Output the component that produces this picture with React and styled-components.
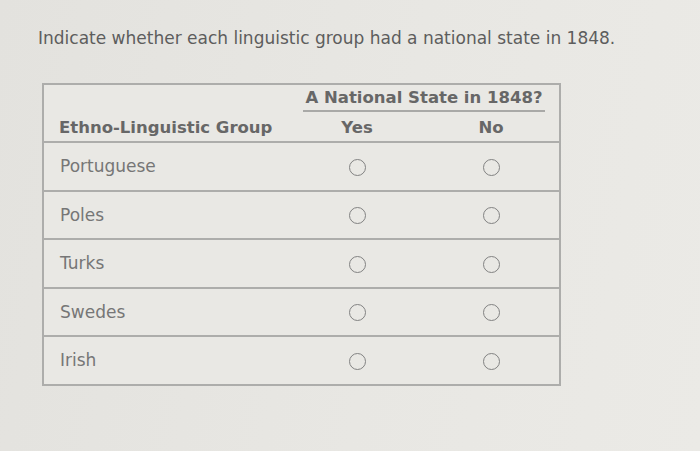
import React from 'react'
import styled, { createGlobalStyle } from 'styled-components'

const GlobalStyle = createGlobalStyle`
    body {
        margin: 0;
        background: #e5e4e0;
        font-family: "DejaVu Sans", Verdana, sans-serif;
    }
`

const Page = styled.div`
    width: 700px;
    height: 451px;
    padding: 28px 0 0 38px;
    box-sizing: border-box;
    background: linear-gradient(100deg, #e3e2de 0%, #e8e7e3 55%, #ebeae6 100%);
`

const Prompt = styled.p`
    margin: 0 0 35px;
    font-size: 17px;
    color: #5d5d5d;
    white-space: nowrap;
`

const Grid = styled.table`
    margin-left: 4px;
    width: 517px;
    table-layout: fixed;
    border-collapse: collapse;
    border: 2px solid #adadab;
    background: #e9e8e4;
`

const HeadCell = styled.th`
    padding: ${p => p.$top ? '3px 0 0' : '6px 0 4px'};
    font-size: 16.5px;
    font-weight: bold;
    color: #676767;
    white-space: nowrap;
    text-align: ${p => p.$left ? 'left' : 'center'};
    padding-left: ${p => p.$left ? '15px' : '0'};
    vertical-align: bottom;
`

const GroupTitle = styled.span`
    display: block;
    margin: 0 14px 0 12px;
    padding-bottom: 3px;
    border-bottom: 2px solid #a9a9a7;
`

const Row = styled.tr`
    border-top: 2px solid #adadab;
`

const Label = styled.td`
    height: 46.5px;
    padding: 0 0 0 16px;
    font-size: 17px;
    color: #767676;
    vertical-align: middle;
`

const Choice = styled.td`
    text-align: center;
    vertical-align: middle;
`

const Radio = styled.span`
    display: inline-block;
    width: 15px;
    height: 15px;
    border: 1.5px solid #828282;
    border-radius: 50%;
    vertical-align: middle;
`

const groups = ['Portuguese', 'Poles', 'Turks', 'Swedes', 'Irish']

export default function App() {
    return (
        <Page>
            <GlobalStyle />
            <Prompt>Indicate whether each linguistic group had a national state in 1848.</Prompt>
            <Grid>
                <colgroup>
                    <col style={{ width: 248 }} />
                    <col style={{ width: 132 }} />
                    <col style={{ width: 137 }} />
                </colgroup>
                <thead>
                    <tr>
                        <HeadCell $top></HeadCell>
                        <HeadCell $top colSpan={2}>
                            <GroupTitle>A National State in 1848?</GroupTitle>
                        </HeadCell>
                    </tr>
                    <tr>
                        <HeadCell $left>Ethno-Linguistic Group</HeadCell>
                        <HeadCell>Yes</HeadCell>
                        <HeadCell>No</HeadCell>
                    </tr>
                </thead>
                <tbody>
                    {groups.map(g => (
                        <Row key={g}>
                            <Label>{g}</Label>
                            <Choice><Radio /></Choice>
                            <Choice><Radio /></Choice>
                        </Row>
                    ))}
                </tbody>
            </Grid>
        </Page>
    )
}
